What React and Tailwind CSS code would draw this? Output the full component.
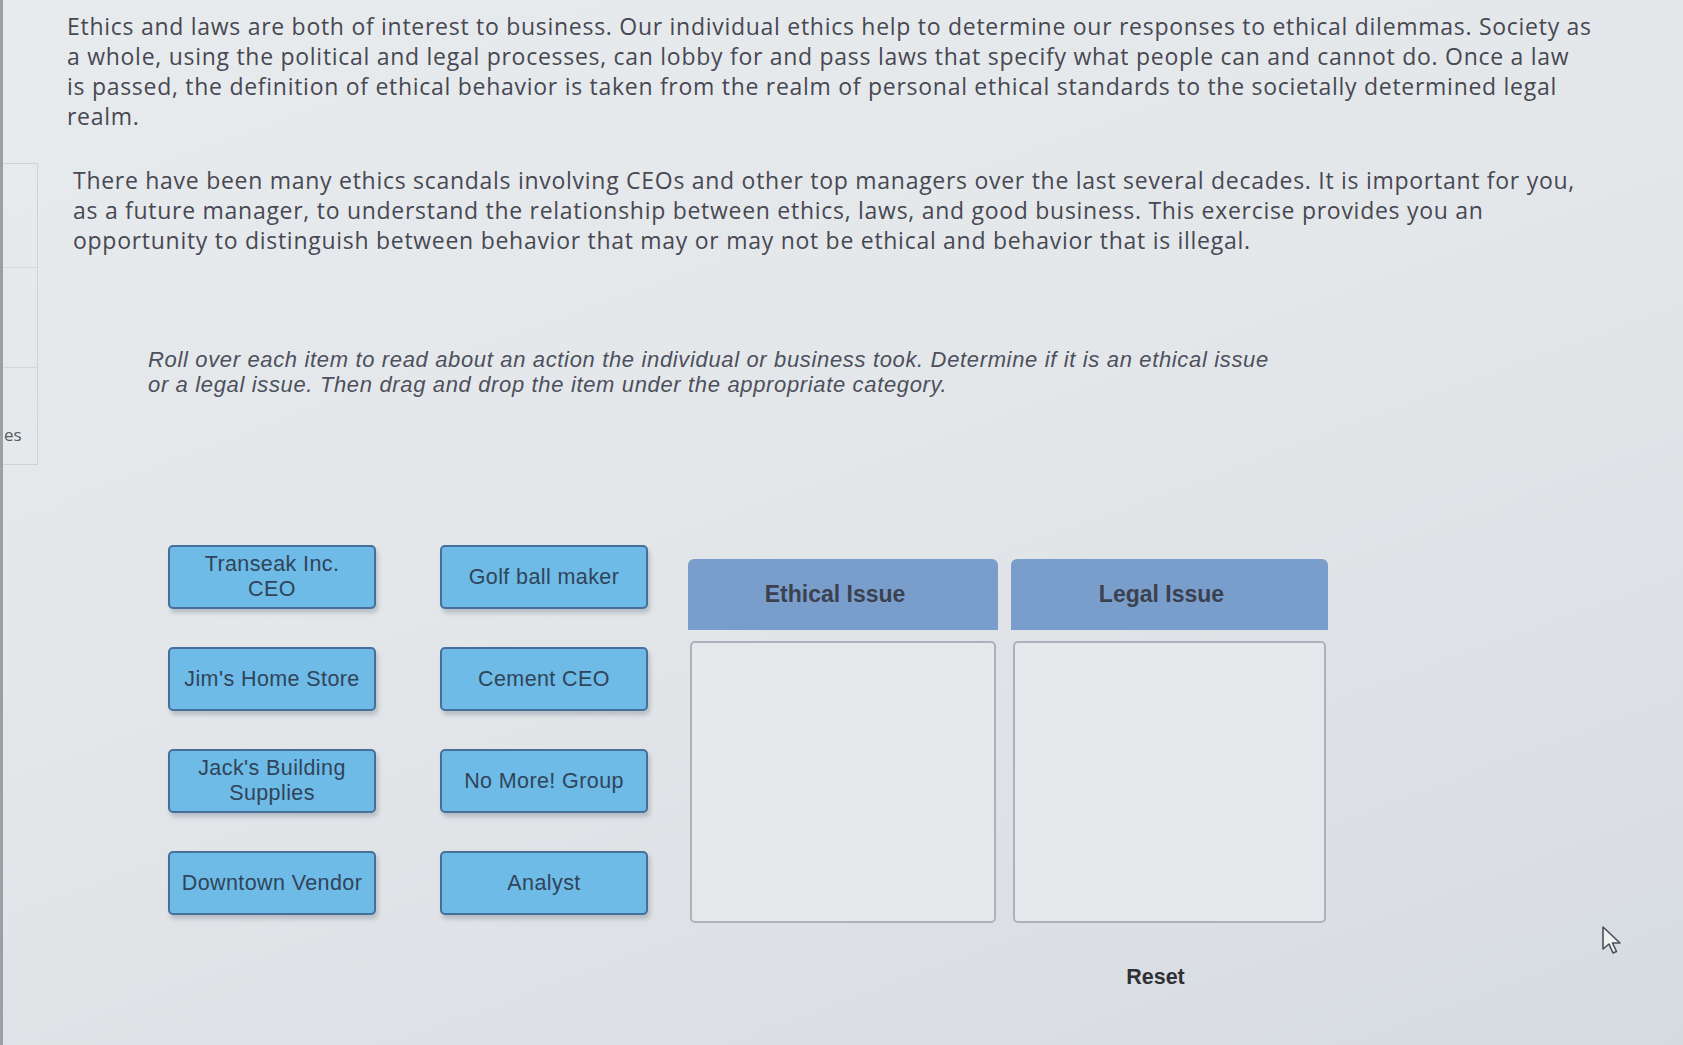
import React from "react";

const items = [
    ["Transeak Inc.", "CEO"],
    ["Golf ball maker"],
    ["Jim's Home Store"],
    ["Cement CEO"],
    ["Jack's Building", "Supplies"],
    ["No More! Group"],
    ["Downtown Vendor"],
    ["Analyst"],
];

const para1 = [
    "Ethics and laws are both of interest to business. Our individual ethics help to determine our responses to ethical dilemmas. Society as",
    "a whole, using the political and legal processes, can lobby for and pass laws that specify what people can and cannot do. Once a law",
    "is passed, the definition of ethical behavior is taken from the realm of personal ethical standards to the societally determined legal",
    "realm.",
];

const para2 = [
    "There have been many ethics scandals involving CEOs and other top managers over the last several decades. It is important for you,",
    "as a future manager, to understand the relationship between ethics, laws, and good business. This exercise provides you an",
    "opportunity to distinguish between behavior that may or may not be ethical and behavior that is illegal.",
];

const DragItem = ({ lines }) => (
    <div className="w-[208px] h-[64px] flex flex-col items-center justify-center rounded-[5px] border-2 border-[#46709a] bg-[#6dbbe6] shadow-[2px_4px_4px_rgba(60,70,90,0.25)] text-[21.5px] leading-[25px] text-[#31445a] font-['Liberation_Sans',Arial,sans-serif] tracking-[0.4px]">
        {lines.map((l) => (
            <span key={l} className="whitespace-nowrap">{l}</span>
        ))}
    </div>
);

const Category = ({ title, wide }) => (
    <div className={`flex flex-col ${wide ? "w-[317px]" : "w-[310px]"}`}>
        <div className="h-[71px] rounded-t-[6px] bg-[#7a9ecb] flex items-center justify-center text-[23px] font-bold text-[#3c4150] font-['Liberation_Sans',Arial,sans-serif]">
            <span className="-ml-[16px]">{title}</span>
        </div>
        <div className="mt-[11px] mx-[2px] h-[282px] rounded-[5px] border-2 border-[#aeb0bb] bg-[#e6e9ec]" />
    </div>
);

export default function App() {
    return (
        <div className="relative w-[1683px] h-[1045px] overflow-hidden bg-[linear-gradient(160deg,#e8ebee_0%,#e3e7ea_45%,#dde1e5_75%,#d6dbe0_100%)] flex font-['Open_Sans','Liberation_Sans',sans-serif]">
            {/* left panel fragment */}
            <div className="w-[38px] shrink-0 border-l-[3px] border-l-[#9aa0a6]">
                <div className="mt-[163px] h-[302px] border-y border-r border-[#cfd3d7] flex flex-col">
                    <div className="h-[104px] border-b border-[#d3d7db]" />
                    <div className="h-[100px] border-b border-[#d3d7db]" />
                    <div className="pt-[58px] pl-[1px] text-[17px] text-[#555a63] leading-none">es</div>
                </div>
            </div>

            <div className="flex-1 pl-[29px] pt-[11px] text-[#474852]">
                <div className="text-[23px] leading-[30px] tracking-[0.72px]">
                    {para1.map((l) => (
                        <div key={l} className="whitespace-nowrap">{l}</div>
                    ))}
                </div>
                <div className="mt-[34px] ml-[6px] text-[23px] leading-[30px] tracking-[0.72px]">
                    {para2.map((l) => (
                        <div key={l} className="whitespace-nowrap">{l}</div>
                    ))}
                </div>

                <div className="mt-[92px] ml-[81px] italic text-[22px] leading-[25px] tracking-[0.65px] text-[#4d505c] font-['Liberation_Sans',Arial,sans-serif]">
                    <div className="whitespace-nowrap">
                        Roll over each item to read about an action the individual or business took. Determine if it is an ethical issue
                    </div>
                    <div className="whitespace-nowrap">
                        or a legal issue. Then drag and drop the item under the appropriate category.
                    </div>
                </div>

                <div className="mt-[148px] ml-[101px] flex items-start">
                    <div className="grid grid-cols-2 gap-x-[64px] gap-y-[38px]">
                        {items.map((lines) => (
                            <DragItem key={lines[0]} lines={lines} />
                        ))}
                    </div>

                    <div className="ml-[40px] mt-[14px] flex flex-col">
                        <div className="flex gap-[13px]">
                            <Category title="Ethical Issue" />
                            <Category title="Legal Issue" wide />
                        </div>
                        <div className="mt-[38px] pl-[295px] w-[640px] text-center">
                            <span className="text-[21.5px] font-bold text-[#2f3136] font-['Liberation_Sans',Arial,sans-serif]">
                                Reset
                            </span>
                        </div>
                    </div>
                </div>
            </div>

            {/* mouse cursor */}
            <svg className="absolute left-[1601px] top-[925px]" width="22" height="32" viewBox="0 0 22 32">
                <path
                    d="M2 2 L2 24 L8 19 L12 28 L15.5 26.5 L11.5 18 L19 18 Z"
                    fill="#eef0f2"
                    stroke="#4a505a"
                    strokeWidth="1.6"
                    strokeLinejoin="round"
                />
            </svg>
        </div>
    );
}
